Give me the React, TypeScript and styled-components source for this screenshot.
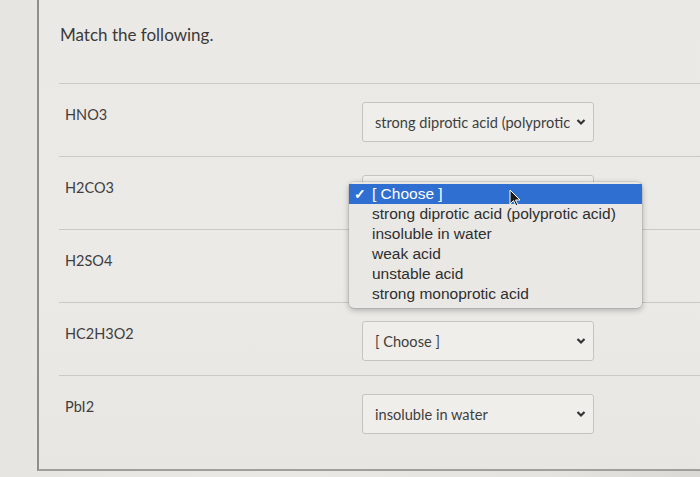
import styled, { createGlobalStyle } from "styled-components";

const GlobalStyle = createGlobalStyle`
  html, body {
    margin: 0;
    padding: 0;
    width: 700px;
    height: 477px;
    overflow: hidden;
    background: #e4e3e0;
  }
  * {
    box-sizing: border-box;
  }
`;

const Page = styled.div`
  display: flex;
  width: 700px;
  height: 477px;
  background: linear-gradient(90deg, #e6e5e2 0%, #e9e8e5 40%, #e4e3df 80%, #d9d8d4 100%);
  font-family: Lato, "Open Sans", sans-serif;
`;

const Gutter = styled.div`
  width: 37px;
  flex-shrink: 0;
`;

const Card = styled.section`
  flex: 1;
  height: 471px;
  border-left: 2px solid #8f8e8b;
  border-bottom: 2px solid #a09f9b;
  padding-left: 20px;
  background: linear-gradient(180deg, #ebe9e6 0%, #eceae7 60%, #e8e6e2 100%);
`;

const Title = styled.h2`
  margin: 0;
  padding: 24px 0 0 1px;
  height: 83px;
  font-size: 17px;
  font-weight: 400;
  color: #3a3a3a;
`;

const Row = styled.div`
  display: flex;
  align-items: flex-start;
  height: 73px;
  border-top: 1.5px solid #cbc9c5;
`;

const Label = styled.div`
  width: 303px;
  padding: 22px 0 0 6px;
  font-size: 14.5px;
  color: #3e3e3e;
`;

const SelectWrap = styled.div`
  position: relative;
  margin-top: 18px;
`;

const Select = styled.div`
  display: flex;
  align-items: center;
  justify-content: space-between;
  width: 232px;
  height: 40px;
  padding: 0 7px 0 12px;
  border: 1px solid #c6c4c0;
  border-radius: 3px;
  background: #efeeeb;
  font-size: 14.6px;
  color: #3e3e3e;
  white-space: nowrap;
  overflow: hidden;
`;

const SelectText = styled.span`
  overflow: hidden;
  text-overflow: clip;
  max-width: 195px;
`;

const Menu = styled.ul`
  position: absolute;
  top: 7px;
  left: -13px;
  width: 293px;
  margin: 0;
  padding: 2px 0 4px;
  list-style: none;
  background: #e9e8e5;
  border-radius: 5px;
  box-shadow: 0 2px 6px rgba(0, 0, 0, 0.28), 0 0 0 0.5px rgba(0, 0, 0, 0.15);
  font-family: "Liberation Sans", Arial, sans-serif;
  font-size: 15.5px;
  z-index: 2;
`;

const Option = styled.li<{ $active?: boolean }>`
  display: flex;
  align-items: center;
  height: 20px;
  padding-left: 5px;
  background: ${(p) => (p.$active ? "#2f6fd1" : "transparent")};
  color: ${(p) => (p.$active ? "#ffffff" : "#2e2e2e")};
`;

const Check = styled.span`
  width: 18px;
  font-size: 14px;
  font-weight: 700;
`;

const Cursor = styled.svg`
  position: absolute;
  left: 160px;
  top: 7px;
`;

const Chevron = () => (
  <svg width="10" height="8" viewBox="0 0 10 8">
    <path d="M1.5 2l3.5 3.5L8.5 2" fill="none" stroke="#333333" strokeWidth="2.2" />
  </svg>
);

const options = [
  "strong diprotic acid (polyprotic acid)",
  "insoluble in water",
  "weak acid",
  "unstable acid",
  "strong monoprotic acid",
];

const rows = [
  { label: "HNO3", value: "strong diprotic acid (polyprotic acid)", select: true },
  { label: "H2CO3", value: "", select: true, open: true },
  { label: "H2SO4", value: "", select: false },
  { label: "HC2H3O2", value: "[ Choose ]", select: true },
  { label: "PbI2", value: "insoluble in water", select: true },
];

export default function App() {
  return (
    <>
      <GlobalStyle />
      <Page>
        <Gutter />
        <Card>
          <Title>Match the following.</Title>
          {rows.map((r) => (
            <Row key={r.label}>
              <Label>{r.label}</Label>
              {r.select && (
                <SelectWrap>
                  <Select>
                    <SelectText>{r.value}</SelectText>
                    <Chevron />
                  </Select>
                  {r.open && (
                    <Menu>
                      <Option $active>
                        <Check>✓</Check>[ Choose ]
                      </Option>
                      {options.map((o) => (
                        <Option key={o}>
                          <Check />
                          {o}
                        </Option>
                      ))}
                      <Cursor width="12" height="18" viewBox="0 0 12 18">
                        <path
                          d="M1 1v14l3.5-3.5 2.5 5.5 2-1-2.5-5H11z"
                          fill="#1a1a1a"
                          stroke="#ffffff"
                          strokeWidth="1"
                        />
                      </Cursor>
                    </Menu>
                  )}
                </SelectWrap>
              )}
            </Row>
          ))}
        </Card>
      </Page>
    </>
  );
}
